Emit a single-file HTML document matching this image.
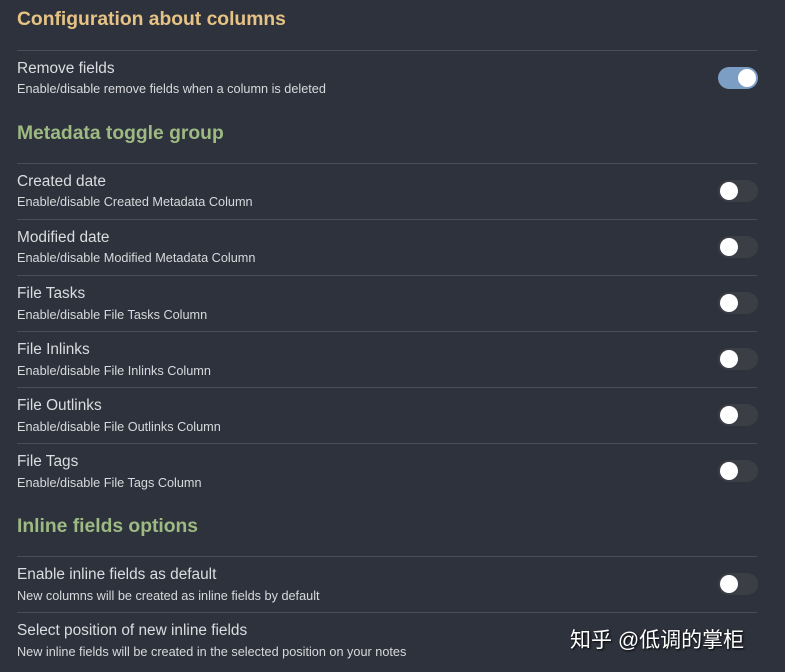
<!DOCTYPE html><html><head><meta charset="utf-8"><style>
body{margin:0;width:785px;height:672px;background:#2e323d;font-family:"Liberation Sans","Noto Sans CJK SC",sans-serif;overflow:hidden;position:relative}
.h{position:absolute;left:17px;font-size:19.3px;font-weight:bold}
.line{position:absolute;left:17px;width:740px;height:1px;background:#4a4e58}
.t{position:absolute;left:17px;font-size:15.4px;color:#dcdde0}
.d{position:absolute;left:17px;font-size:12.7px;color:#d8d9dc}
.tg{position:absolute;left:718px;width:40px;height:22px;border-radius:11px;background:#3b3e45}
.tg i{position:absolute;top:2px;left:2px;width:18px;height:18px;border-radius:50%;background:#fff}
.tg.on{background:#7c9dc4}.tg.on i{left:20px}
</style></head><body>
<div class="h" style="top:9px;color:#e6c384">Configuration about columns</div>
<div class="line" style="top:50px"></div>
<div class="t" style="top:60px">Remove fields</div><div class="d" style="top:82px">Enable/disable remove fields when a column is deleted</div><div class="tg on" style="top:67px"><i></i></div>
<div class="h" style="top:123px;color:#9dba82">Metadata toggle group</div>
<div class="line" style="top:163px"></div>
<div class="t" style="top:173px">Created date</div><div class="d" style="top:195px">Enable/disable Created Metadata Column</div><div class="tg" style="top:180px"><i></i></div>
<div class="line" style="top:219px"></div>
<div class="t" style="top:229px">Modified date</div><div class="d" style="top:251px">Enable/disable Modified Metadata Column</div><div class="tg" style="top:236px"><i></i></div>
<div class="line" style="top:275px"></div>
<div class="t" style="top:285px">File Tasks</div><div class="d" style="top:308px">Enable/disable File Tasks Column</div><div class="tg" style="top:292px"><i></i></div>
<div class="line" style="top:331px"></div>
<div class="t" style="top:341px">File Inlinks</div><div class="d" style="top:364px">Enable/disable File Inlinks Column</div><div class="tg" style="top:348px"><i></i></div>
<div class="line" style="top:387px"></div>
<div class="t" style="top:397px">File Outlinks</div><div class="d" style="top:420px">Enable/disable File Outlinks Column</div><div class="tg" style="top:404px"><i></i></div>
<div class="line" style="top:443px"></div>
<div class="t" style="top:453px">File Tags</div><div class="d" style="top:476px">Enable/disable File Tags Column</div><div class="tg" style="top:460px"><i></i></div>
<div class="h" style="top:516px;color:#9dba82">Inline fields options</div>
<div class="line" style="top:556px"></div>
<div class="t" style="top:566px">Enable inline fields as default</div><div class="d" style="top:589px">New columns will be created as inline fields by default</div><div class="tg" style="top:573px"><i></i></div>
<div class="line" style="top:612px"></div>
<div class="t" style="top:622px">Select position of new inline fields</div><div class="d" style="top:645px">New inline fields will be created in the selected position on your notes</div>
<div style="position:absolute;left:570px;top:624px;font-size:21px;color:#fff;text-shadow:1px 1px 2px #000">知乎 @低调的掌柜</div>
</body></html>
